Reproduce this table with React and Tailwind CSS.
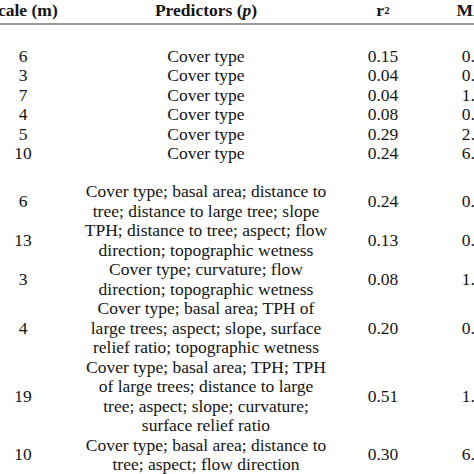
import React from "react";

const coverRows = [
    { scale: "6", r2: "0.15", m: "0.31" },
    { scale: "3", r2: "0.04", m: "0.22" },
    { scale: "7", r2: "0.04", m: "1.12" },
    { scale: "4", r2: "0.08", m: "0.54" },
    { scale: "5", r2: "0.29", m: "2.07" },
    { scale: "10", r2: "0.24", m: "6.18" },
];

const bestRows = [
    { scale: "6", lines: ["Cover type; basal area; distance to", "tree; distance to large tree; slope"], r2: "0.24", m: "0.29" },
    { scale: "13", lines: ["TPH; distance to tree; aspect; flow", "direction; topographic wetness"], r2: "0.13", m: "0.21" },
    { scale: "3", lines: ["Cover type; curvature; flow", "direction; topographic wetness"], r2: "0.08", m: "1.08" },
    { scale: "4", lines: ["Cover type; basal area; TPH of", "large trees; aspect; slope, surface", "relief ratio; topographic wetness"], r2: "0.20", m: "0.52" },
    { scale: "19", lines: ["Cover type; basal area; TPH; TPH", "of large trees; distance to large", "tree; aspect; slope; curvature;", "surface relief ratio"], r2: "0.51", m: "1.46" },
    { scale: "10", lines: ["Cover type; basal area; distance to", "tree; aspect; flow direction"], r2: "0.30", m: "6.02" },
];

function Row({ scale, lines, r2, m }) {
    return (
        <>
            <div className="flex items-center justify-center">{scale}</div>
            <div className="flex flex-col items-center justify-center text-center">
                {lines.map((l, i) => (
                    <span key={i}>{l}</span>
                ))}
            </div>
            <div className="flex items-center justify-center">{r2}</div>
            <div className="flex items-center justify-center">{m}</div>
        </>
    );
}

function App() {
    return (
        <div className="w-[474px] h-[474px] overflow-hidden bg-white">
            <div
                className="ml-[-20px] w-[554px] text-[#141414] text-[17.5px] leading-[19.5px]"
                style={{ fontFamily: '"Liberation Serif", "DejaVu Serif", serif' }}
            >
                <div className="grid grid-cols-[86px_280px_74px_114px] pt-[1px] pb-[2px] border-b-2 border-[#9a9a9a] font-bold">
                    <div className="text-center">Scale (m)</div>
                    <div className="text-center">
                        Predictors (<span className="italic">p</span>)
                    </div>
                    <div className="text-center">
                        r<sup className="text-[11px] relative top-[-2px]">2</sup>
                    </div>
                    <div className="text-center">MAE</div>
                </div>
                <div className="h-[22px]"></div>
                <div className="grid grid-cols-[86px_280px_74px_114px]">
                    {coverRows.map((r, i) => (
                        <Row key={i} scale={r.scale} lines={["Cover type"]} r2={r.r2} m={r.m} />
                    ))}
                </div>
                <div className="h-[18.5px]"></div>
                <div className="grid grid-cols-[86px_280px_74px_114px]">
                    {bestRows.map((r, i) => (
                        <Row key={i} {...r} />
                    ))}
                </div>
            </div>
        </div>
    );
}

export default App;
